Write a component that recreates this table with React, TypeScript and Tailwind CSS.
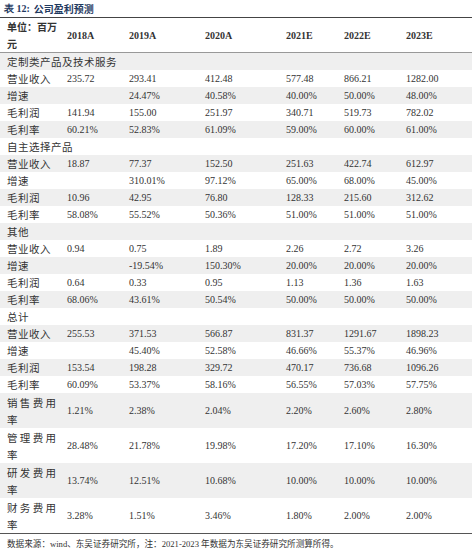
const years = ["2018A", "2019A", "2020A", "2021E", "2022E", "2023E"];

type Row = { label: string; values?: string[]; section?: boolean };

const groups: Row[] = [
  { label: "定制类产品及技术服务", section: true },
  { label: "营业收入", values: ["235.72", "293.41", "412.48", "577.48", "866.21", "1282.00"] },
  { label: "增速", values: ["", "24.47%", "40.58%", "40.00%", "50.00%", "48.00%"] },
  { label: "毛利润", values: ["141.94", "155.00", "251.97", "340.71", "519.73", "782.02"] },
  { label: "毛利率", values: ["60.21%", "52.83%", "61.09%", "59.00%", "60.00%", "61.00%"] },
  { label: "自主选择产品", section: true },
  { label: "营业收入", values: ["18.87", "77.37", "152.50", "251.63", "422.74", "612.97"] },
  { label: "增速", values: ["", "310.01%", "97.12%", "65.00%", "68.00%", "45.00%"] },
  { label: "毛利润", values: ["10.96", "42.95", "76.80", "128.33", "215.60", "312.62"] },
  { label: "毛利率", values: ["58.08%", "55.52%", "50.36%", "51.00%", "51.00%", "51.00%"] },
  { label: "其他", section: true },
  { label: "营业收入", values: ["0.94", "0.75", "1.89", "2.26", "2.72", "3.26"] },
  { label: "增速", values: ["", "-19.54%", "150.30%", "20.00%", "20.00%", "20.00%"] },
  { label: "毛利润", values: ["0.64", "0.33", "0.95", "1.13", "1.36", "1.63"] },
  { label: "毛利率", values: ["68.06%", "43.61%", "50.54%", "50.00%", "50.00%", "50.00%"] },
  { label: "总计", section: true },
  { label: "营业收入", values: ["255.53", "371.53", "566.87", "831.37", "1291.67", "1898.23"] },
  { label: "增速", values: ["", "45.40%", "52.58%", "46.66%", "55.37%", "46.96%"] },
  { label: "毛利润", values: ["153.54", "198.28", "329.72", "470.17", "736.68", "1096.26"] },
  { label: "毛利率", values: ["60.09%", "53.37%", "58.16%", "56.55%", "57.03%", "57.75%"] },
];

const ratios = [
  { label: "销售费用", values: ["1.21%", "2.38%", "2.04%", "2.20%", "2.60%", "2.80%"] },
  { label: "管理费用", values: ["28.48%", "21.78%", "19.98%", "17.20%", "17.10%", "16.30%"] },
  { label: "研发费用", values: ["13.74%", "12.51%", "10.68%", "10.00%", "10.00%", "10.00%"] },
  { label: "财务费用", values: ["3.28%", "1.51%", "3.46%", "1.80%", "2.00%", "2.00%"] },
];

const cjk = "font-['Noto_Sans_CJK_SC',sans-serif]";
const serif = "font-['Liberation_Serif','Times_New_Roman',serif]";
const cols = "grid grid-cols-[60px_62px_76px_81px_58px_62px_1fr] pl-[7px] items-center";

export default function App() {
  return (
    <div className="w-[474px] h-[551px] bg-white text-[#333]">
      <div className={`h-[17px] flex items-center pl-[4px] text-[10px] font-bold text-[#1f3a5f] ${cjk}`}>
        <span className={serif}>表 12:</span>
        <span className="ml-[4px]">公司盈利预测</span>
      </div>

      <div className="mr-[2px] border-t-[1.5px] border-[#444]">
        <div className={`${cols} h-[35px] border-b border-[#999]`}>
          <div className={`text-[10px] font-bold leading-[17px] ${cjk}`}>
            <div>单位：百万</div>
            <div>元</div>
          </div>
          {years.map((y) => (
            <div key={y} className={`text-[10px] font-bold ${serif}`}>
              {y}
            </div>
          ))}
        </div>

        {groups.map((r, i) => (
          <div
            key={i}
            className={`${cols} h-[17px] ${i % 2 === 0 ? "bg-[#efefef]" : "bg-white"}`}
          >
            <div
              className={`text-[10.5px] whitespace-nowrap tracking-[0.5px] ${cjk} ${
                r.section ? "col-span-7" : ""
              }`}
            >
              {r.label}
            </div>
            {r.values?.map((v, j) => (
              <div key={j} className={`text-[10px] ${serif}`}>
                {v}
              </div>
            ))}
          </div>
        ))}

        {ratios.map((r, i) => (
          <div
            key={r.label}
            className={`${cols} h-[35px] ${i % 2 === 0 ? "bg-[#efefef]" : "bg-white"}`}
          >
            <div className={`w-[49px] text-[10.5px] leading-[17px] ${cjk}`}>
              <div className="flex justify-between">
                {r.label.split("").map((c) => (
                  <span key={c}>{c}</span>
                ))}
              </div>
              <div>率</div>
            </div>
            {r.values.map((v, j) => (
              <div key={j} className={`text-[10px] ${serif}`}>
                {v}
              </div>
            ))}
          </div>
        ))}

        <div className="border-t-[1.5px] border-[#555]" />
      </div>

      <div className={`pl-[7px] pt-[3px] text-[8.6px] text-[#333] whitespace-nowrap ${cjk}`}>
        数据来源：<span className={serif}>wind</span>、东吴证券研究所，注：
        <span className={serif}>2021-2023 </span>年数据为东吴证券研究所测算所得。
      </div>
    </div>
  );
}
